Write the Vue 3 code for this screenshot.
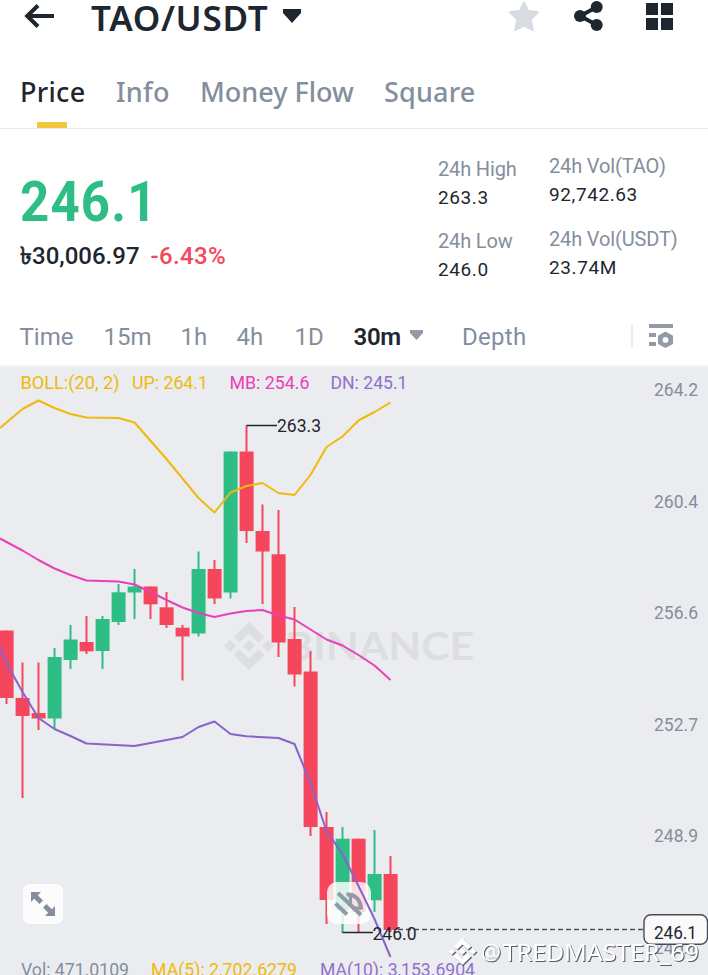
<template>
  <div class="page">
    <header class="topbar">
      <svg class="back" viewBox="0 0 30 24" fill="none" stroke="#1e2630" stroke-width="4">
        <path d="M30 12H3M14 1.5L3.2 12L14 22.5" />
      </svg>
      <h1 class="pair">TAO/USDT</h1>
      <svg class="pair-caret" viewBox="0 0 18 14" fill="#1e2630"><path d="M0 0H18V4L9 14L0 4Z" /></svg>
      <svg class="star" viewBox="0 0 30 30" fill="#d8dbe1" stroke="#d8dbe1" stroke-width="2" stroke-linejoin="round">
        <path d="M15 1.5L19 9.7L29 11.2L21.8 18.5L23.8 29L15 24.5L6.2 29L8.2 18.5L1 11.2L11 9.7Z" />
      </svg>
      <svg class="share" viewBox="0 0 29 30" fill="#1e2630">
        <path d="M6 15L23 6M6 15L23 24" stroke="#1e2630" stroke-width="4" />
        <circle cx="6" cy="15" r="6" />
        <circle cx="22.7" cy="6" r="6" />
        <circle cx="22.7" cy="24" r="6" />
      </svg>
      <svg class="grid-icon" viewBox="0 0 27 27" fill="#1e2630">
        <path d="M0 0h12v12H0zM15 0h12v12H15zM0 15h12v12H0zM15 15h12v12H15z" />
      </svg>
    </header>

    <nav class="tabs">
      <a v-for="tab in tabs" :key="tab.label" class="tab" :class="[tab.cls, { active: tab.active }]">{{ tab.label }}</a>
    </nav>

    <section class="ticker">
      <div class="quote">
        <div class="last">246.1</div>
        <div class="sub">
          <span class="fiat"><span class="taka">৳</span>30,006.97</span>
          <span class="change">-6.43%</span>
        </div>
      </div>
      <dl class="stats stats-range">
        <dt>24h High</dt>
        <dd>263.3</dd>
        <dt>24h Low</dt>
        <dd>246.0</dd>
      </dl>
      <dl class="stats stats-volume">
        <dt>24h Vol(TAO)</dt>
        <dd>92,742.63</dd>
        <dt>24h Vol(USDT)</dt>
        <dd>23.74M</dd>
      </dl>
    </section>

    <div class="intervals">
      <span class="iv time">Time</span>
      <span class="iv m15">15m</span>
      <span class="iv h1">1h</span>
      <span class="iv h4">4h</span>
      <span class="iv d1">1D</span>
      <span class="iv m30">30m</span>
      <svg class="iv-caret" viewBox="0 0 13 10" fill="#929aa5"><path d="M0 0H13V3L6.5 10L0 3Z" /></svg>
      <span class="iv depth">Depth</span>
      <i class="divider"></i>
      <svg class="settings" viewBox="0 0 24 24" fill="#929aa5">
        <path d="M0 0H24V4H0ZM0 9H7V13H0ZM0 18H7V22H0Z" />
        <path fill-rule="evenodd" d="M16.5 7.5L24 11.7V20L16.5 24L9 20V11.7ZM16.5 13A2.9 2.9 0 1 0 16.5 18.8A2.9 2.9 0 1 0 16.5 13Z" />
      </svg>
    </div>

    <svg class="chart" viewBox="0 365 708 610">
      <rect y="365" width="708" height="610" fill="#eaecef" />
      <rect y="365" width="708" height="2" fill="#f3f4f6" />

      <!-- watermark -->
      <g fill="#dcdee2">
        <g transform="translate(249 646)">
          <path :d="logo" />
        </g>
        <text x="285" y="660" class="mark" textLength="189" lengthAdjust="spacingAndGlyphs">BINANCE</text>
      </g>

      <g class="num axis">
        <text v-for="t in axis" :key="t.y" x="654" :y="t.y" textLength="44" lengthAdjust="spacingAndGlyphs">{{ t.label }}</text>
      </g>

      <g v-for="(c, i) in candles" :key="i" :fill="c[0] ? '#2ebd85' : '#f6465d'">
        <rect :x="5.5 + i * 16" :y="c[1]" width="2" :height="c[4] - c[1]" />
        <rect :x="-0.4 + i * 16" :y="c[2]" width="14" :height="c[3] - c[2]" />
      </g>

      <path d="M398 929.5H644" stroke="#4c525c" stroke-width="1.3" stroke-dasharray="5 3" />

      <!-- hide indicators button -->
      <rect x="327" y="882" width="44" height="42" rx="10" fill="#fff" fill-opacity=".82" />
      <g fill="none" stroke="#929aa5" stroke-width="4">
        <path d="M338 893L361 915M335.5 903.5L347 914.5" />
        <path d="M346.5 894.5C355 894 361 900 361 909.5" />
        <path d="M350.5 894V904.5M352.5 908.2H361" stroke-width="3.2" />
      </g>

      <g fill="none" stroke-width="2" stroke-linejoin="round">
        <polyline :points="upper" stroke="#f0b90b" />
        <polyline :points="middle" stroke="#eb40b5" />
        <polyline :points="lower" stroke="#8a62c9" />
      </g>

      <path d="M246.5 425.5H277M342.5 932.5H373" stroke="#1e2630" stroke-width="1.3" />
      <g class="num hilo">
        <text x="277" y="432" textLength="44" lengthAdjust="spacingAndGlyphs">263.3</text>
        <text x="372.5" y="940" textLength="44" lengthAdjust="spacingAndGlyphs">246.0</text>
      </g>

      <g class="num">
        <text v-for="l in legend" :key="l.text" :x="l.x" :y="l.y" :fill="l.fill" :textLength="l.w" lengthAdjust="spacingAndGlyphs">{{ l.text }}</text>
      </g>

      <!-- expand button -->
      <rect x="23" y="884" width="40" height="40" rx="7" fill="#fff" fill-opacity=".85" />
      <path d="M31 892H41L37.8 895.2L43 900.5L39.5 904L34.2 898.8L31 902ZM55 916H45L48.2 912.8L43 907.5L46.5 904L51.8 909.2L55 906Z" fill="#848e9c" />

      <!-- current price -->
      <text class="num axis" x="654" y="954" textLength="44" lengthAdjust="spacingAndGlyphs">245.1</text>
      <rect x="644" y="914.7" width="63.5" height="29.5" rx="7" fill="#fafafa" stroke="#474d57" stroke-width="1.4" />
      <text class="num hilo" x="654" y="939" textLength="43" lengthAdjust="spacingAndGlyphs">246.1</text>

      <!-- author stamp -->
      <g class="stamp" fill="#fff">
        <g transform="translate(462.5 951.5) scale(.56)">
          <path :d="logo" />
        </g>
        <ellipse cx="493" cy="953" rx="6.5" ry="7.5" fill-opacity=".7" />
        <text x="481" y="960" class="at" textLength="20" lengthAdjust="spacingAndGlyphs">@</text>
        <text x="503" y="961" textLength="196" lengthAdjust="spacingAndGlyphs">TREDMASTER_69</text>
      </g>
    </svg>
  </div>
</template>

<script setup>
const tabs = [
  { label: 'Price', cls: 'price', active: true },
  { label: 'Info', cls: 'info' },
  { label: 'Money Flow', cls: 'flow' },
  { label: 'Square', cls: 'square' }
]

const logo = 'M0 -24L15.5 -9L9.5 -3.5L0 -12.5L-9.5 -3.5L-15.5 -9ZM0 24L15.5 9L9.5 3.5L0 12.5L-9.5 3.5L-15.5 9ZM0 -6L6 0L0 6L-6 0ZM-19 -6L-13 0L-19 6L-25 0ZM19 -6L25 0L19 6L13 0Z'

const axis = [
  { label: '264.2', y: 396 },
  { label: '260.4', y: 508 },
  { label: '256.6', y: 619 },
  { label: '252.7', y: 731 },
  { label: '248.9', y: 842 }
]

// [rising, high, body top, body bottom, low]
const candles = [
  [0, 630.5, 630.5, 698, 704],
  [0, 662.5, 698, 716, 798],
  [0, 662.5, 713, 718.5, 730],
  [1, 648, 657, 718.5, 728],
  [1, 625, 639.5, 660, 669],
  [0, 616, 642, 651.3, 654],
  [1, 616, 619, 651, 669],
  [1, 584, 592.3, 622, 625],
  [1, 569, 586.5, 592.5, 619],
  [0, 586.5, 586.5, 604.3, 619],
  [0, 592, 607.3, 625, 628],
  [0, 625, 627.7, 636.5, 680.5],
  [1, 551.5, 569, 633.5, 636.5],
  [0, 560, 569, 598.5, 604],
  [1, 451.5, 451.5, 592.5, 598.5],
  [0, 425.5, 451.5, 531, 543],
  [0, 504.5, 531, 551.5, 604],
  [0, 510, 554.3, 642.5, 657],
  [0, 607, 639, 674.5, 686.5],
  [0, 651, 671.5, 827, 836],
  [0, 812, 827, 900, 924],
  [1, 827, 838.7, 910, 933],
  [0, 838.7, 838.7, 912, 932],
  [1, 830, 874, 900.3, 912],
  [0, 856, 874, 930, 932]
]

const upper = '0,428 22.5,409 38.5,400.5 54.5,408 70.5,414 86.5,417.5 118.5,418 134.5,422.5 166.5,459 198.5,498 214.5,512.5 230.5,492.5 246.5,486 262.5,483 278.5,493 294.5,495 310.5,475 326.5,447 342.5,436.5 358.5,420.5 374.5,412 390.5,402.5'
const middle = '0,538.5 22.5,550.5 38.5,560 54.5,568.5 70.5,575 86.5,580.5 118.5,581.5 134.5,584.5 150.5,592 166.5,600 182.5,607.5 198.5,613 214.5,617 230.5,613.5 246.5,611 262.5,610 278.5,615.5 294.5,619.5 310.5,629.5 326.5,639.5 342.5,645.5 358.5,655 374.5,665.5 390.5,680'
const lower = '0,648 6.5,663 22.5,692 38.5,718 54.5,729 70.5,736 86.5,743.5 134.5,746 166.5,740 182.5,737 198.5,727 214.5,721.5 230.5,734 246.5,736.3 278.5,738 294.5,744 310.5,783 326.5,831 342.5,854 358.5,886 374.5,919 390.5,957'

const legend = [
  { text: 'BOLL:(20, 2)', x: 20.5, y: 389, w: 99, fill: '#f0b90b' },
  { text: 'UP: 264.1', x: 132, y: 389, w: 76, fill: '#f0b90b' },
  { text: 'MB: 254.6', x: 229.5, y: 389, w: 80, fill: '#eb40b5' },
  { text: 'DN: 245.1', x: 330.5, y: 389, w: 77, fill: '#9170cc' },
  { text: 'Vol: 471.0109', x: 21, y: 976, w: 108, fill: '#848e9c' },
  { text: 'MA(5): 2,702.6279', x: 151, y: 976, w: 146, fill: '#f0b90b' },
  { text: 'MA(10): 3,153.6904', x: 320, y: 976, w: 155, fill: '#9170cc' }
]
</script>

<style>
body {
  margin: 0;
  background: #fff;
}
</style>

<style scoped>
.page {
  width: 708px;
  height: 975px;
  overflow: hidden;
  background: #fff;
  color: #1e2630;
  font-family: Roboto, "Noto Sans", "DejaVu Sans", sans-serif;
}

.topbar {
  display: flex;
  align-items: flex-start;
  height: 60px;
  box-sizing: border-box;
  padding-left: 24px;
}

.topbar svg {
  flex: none;
}

.back {
  width: 30px;
  height: 24px;
  margin-top: 4px;
}

.pair {
  width: 192px;
  margin: 0 0 0 37px;
  font: 600 35px/35px "Noto Sans", sans-serif;
  letter-spacing: 0.7px;
  white-space: nowrap;
}

.pair-caret {
  width: 18px;
  height: 14px;
  margin-top: 9px;
}

.star {
  width: 30px;
  height: 30px;
  margin: 1px 0 0 208px;
}

.share {
  width: 29px;
  height: 30px;
  margin: 1px 0 0 35px;
}

.grid-icon {
  width: 27px;
  height: 27px;
  margin: 2.5px 0 0 42.5px;
}

.tabs {
  display: flex;
  height: 69px;
  box-sizing: border-box;
  padding-left: 20px;
  border-bottom: 1px solid #e6e8ec;
}

.tab {
  position: relative;
  flex: none;
  font: 500 27px/64px "Noto Sans", sans-serif;
  color: #848e9c;
  white-space: nowrap;
}

.tab.active {
  color: #1e2630;
}

.tab.active::after {
  content: '';
  position: absolute;
  left: 17px;
  bottom: 0;
  width: 30px;
  height: 6px;
  background: #f3c73c;
}

.price {
  width: 96px;
  letter-spacing: 0.3px;
}

.info {
  width: 84px;
  letter-spacing: 0.3px;
}

.flow {
  width: 184px;
}

.square {
  letter-spacing: 0.2px;
}

.ticker {
  display: flex;
  height: 181px;
}

.quote {
  width: 418px;
  padding: 40px 0 0 20px;
}

.last {
  font-size: 56px;
  line-height: 66px;
  font-weight: 700;
  letter-spacing: 1.3px;
  color: #2ebd85;
  transform: scaleX(0.91);
  transform-origin: 0 0;
}

.sub {
  display: flex;
  margin-top: 8px;
  font-size: 24px;
  font-weight: 500;
  line-height: 26px;
}

.fiat {
  width: 130.5px;
  white-space: nowrap;
}

.taka {
  -webkit-text-stroke: 0.8px #1e2630;
}

.change {
  letter-spacing: 0.35px;
  color: #f6465d;
}

.stats {
  margin: 0;
  font-size: 19px;
  line-height: 28px;
  white-space: nowrap;
}

.stats dt {
  color: #848e9c;
  font-size: 20px;
  letter-spacing: -0.15px;
}

.stats dd {
  margin: 1px 0 15px;
  letter-spacing: 0.6px;
}

.stats-range {
  width: 111px;
  padding-top: 26px;
}

.stats-volume {
  padding-top: 23px;
}

.stats-volume dd {
  margin: 1px 0 16px;
}

.intervals {
  display: flex;
  align-items: center;
  height: 55px;
  padding: 0 0 4px 19.5px;
  box-sizing: border-box;
}

.iv {
  flex: none;
  margin-top: 2px;
  font-size: 24px;
  line-height: 30px;
  color: #848e9c;
}

.time {
  width: 84px;
}

.m15 {
  width: 77px;
}

.h1 {
  width: 56px;
}

.h4 {
  width: 58px;
}

.d1 {
  width: 59px;
}

.m30 {
  width: 56.5px;
  font-weight: 600;
  letter-spacing: -0.3px;
  color: #1e2630;
}

.iv-caret {
  flex: none;
  width: 13px;
  height: 10px;
  margin-bottom: 1px;
}

.depth {
  width: 169px;
  margin-left: 39px;
  letter-spacing: 0.3px;
}

.divider {
  width: 2px;
  height: 24px;
  background: #eaecef;
}

.settings {
  width: 24px;
  height: 24px;
  margin-left: 16px;
}

.chart {
  display: block;
  width: 708px;
  height: 610px;
}

.num {
  font-size: 18px;
}

.axis {
  fill: #848e9c;
}

.hilo {
  fill: #1e2630;
}

.mark {
  font: 700 39px Lato, sans-serif;
}

.stamp {
  font-family: "Noto Sans", sans-serif;
  font-size: 24px;
  filter: drop-shadow(1px 1px 0.6px #555c66);
}

.at {
  font-size: 22px;
}
</style>
